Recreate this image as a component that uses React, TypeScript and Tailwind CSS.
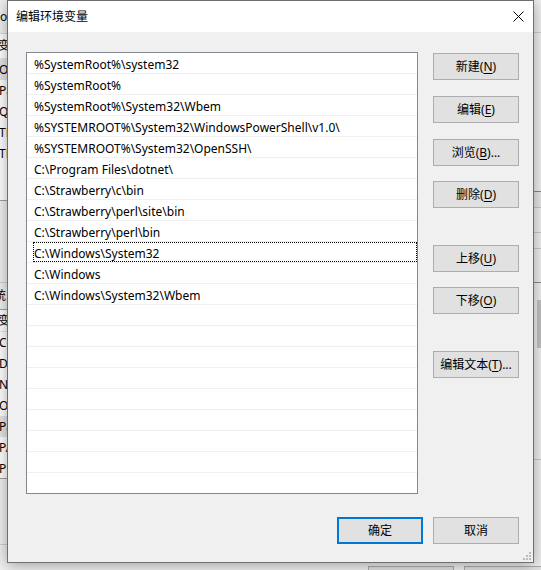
import React from "react"

const font = "font-['Segoe_UI','Noto_Sans','Noto_Sans_CJK_SC',sans-serif]"

const entries = [
  "%SystemRoot%\\system32",
  "%SystemRoot%",
  "%SystemRoot%\\System32\\Wbem",
  "%SYSTEMROOT%\\System32\\WindowsPowerShell\\v1.0\\",
  "%SYSTEMROOT%\\System32\\OpenSSH\\",
  "C:\\Program Files\\dotnet\\",
  "C:\\Strawberry\\c\\bin",
  "C:\\Strawberry\\perl\\site\\bin",
  "C:\\Strawberry\\perl\\bin",
  "C:\\Windows\\System32",
  "C:\\Windows",
  "C:\\Windows\\System32\\Wbem",
]

const FOCUSED = 9
const ROWS = 21

type BtnProps = {
  label: string
  mnemonic?: string
  tail?: string
  primary?: boolean
  className?: string
}

function Btn({ label, mnemonic, tail = "", primary, className = "" }: BtnProps) {
  return (
    <button
      type="button"
      className={`flex h-[27px] w-[86px] items-center justify-center bg-[#e1e1e1] text-[12px] leading-none text-black ${
        primary ? "border-2 border-[#0078d7]" : "border border-[#adadad]"
      } ${className}`}
    >
      <span>
        {label}
        {mnemonic && (
          <>
            (<span className="underline decoration-1 underline-offset-[2px]">{mnemonic}</span>)
          </>
        )}
        {tail}
      </span>
    </button>
  )
}

type BackRow = { t: string; h: number; head?: boolean; sel?: boolean }

function BackList({ rows, className }: { rows: BackRow[]; className: string }) {
  return (
    <div className={`flex shrink-0 flex-col bg-white ${className}`}>
      {rows.map((r, i) => (
        <div
          key={i}
          style={{ height: r.h }}
          className={`flex shrink-0 items-center whitespace-nowrap ${
            r.head ? "-ml-[2px] border-b border-[#e5e5e5]" : "-ml-px"
          } ${r.sel ? "bg-[#e5e5e5]" : ""}`}
        >
          {r.t}
        </div>
      ))}
    </div>
  )
}

// window behind the dialog, only its edges peek out
function BackWindow() {
  const user: BackRow[] = [
    { t: "变", h: 25, head: true },
    { t: "On", h: 21, sel: true },
    { t: "Pa", h: 21 },
    { t: "Qt", h: 21 },
    { t: "TE", h: 21 },
    { t: "TM", h: 21 },
  ]
  const sys: BackRow[] = [
    { t: "变", h: 22, head: true },
    { t: "Co", h: 21 },
    { t: "Dr", h: 21 },
    { t: "NU", h: 21 },
    { t: "OS", h: 21 },
    { t: "Pa", h: 21, sel: true },
    { t: "PA", h: 21 },
    { t: "PR", h: 21 },
  ]
  return (
    <div className="absolute inset-0 flex bg-[#f0f0f0] text-[12px] text-black">
      <div className="flex w-[7px] flex-col overflow-hidden">
        <div className="flex h-[34px] shrink-0 items-center border-b border-[#d9d9d9] pt-[1px]">o</div>
        <BackList rows={user} className="h-[167px] border-b border-[#a0a0a0]" />
        <div className="h-[82px] shrink-0 border-b border-[#d0d0d0]" />
        <div className="flex h-[26px] shrink-0 items-center whitespace-nowrap -ml-[6px]">统</div>
        <BackList rows={sys} className="h-[170px] border-y border-[#a0a0a0]" />
        <div className="h-[66px] shrink-0 border-b border-[#d0d0d0]" />
      </div>
      <div className="ml-auto flex w-[8px] flex-col">
        <div className="h-[33px] shrink-0 border-b border-[#d0d0d0]" />
        <div className="h-[159px] shrink-0 border-b border-[#8a8a8a]" />
        <div className="h-[16px] shrink-0 border-b border-[#c8c8c8] bg-[#e8e8e8]" />
        <div className="h-[25px] shrink-0 border-b border-[#c8c8c8]" />
        <div className="h-[16px] shrink-0 border-b border-[#c8c8c8]" />
        <div className="h-[34px] shrink-0 border-b border-[#8a8a8a]" />
        <div className="flex h-[160px] shrink-0 justify-end">
          <div className="mt-[17px] h-[48px] w-[4px] bg-[#c2c2c2]" />
        </div>
        <div className="h-[17px] shrink-0 border-b border-[#c8c8c8]" />
      </div>
    </div>
  )
}

export default function App() {
  return (
    <div className={`relative h-[570px] w-[541px] overflow-hidden ${font}`}>
      <BackWindow />

      {/* buttons of the window behind, under the dialog */}
      <div className="absolute left-[368px] top-[566px] flex gap-[10px]">
        <div className="h-[27px] w-[86px] border border-[#adadad] bg-[#e1e1e1]" />
        <div className="h-[27px] w-[86px] border border-[#adadad] bg-[#e1e1e1]" />
      </div>

      <div className="absolute left-[7px] top-0 flex h-[563px] w-[527px] flex-col border border-[#6f6f6f] bg-[#f0f0f0] shadow-[0_2px_14px_rgba(0,0,0,0.35)]">
        <div className="flex h-[31px] shrink-0 items-center justify-between bg-white pl-[8px] pr-[9px]">
          <span className="text-[12px] text-black">编辑环境变量</span>
          <svg width="11" height="11" viewBox="0 0 11 11" className="mb-px">
            <path d="M0.5 0.5 L10.5 10.5 M10.5 0.5 L0.5 10.5" stroke="#000" strokeWidth="1" />
          </svg>
        </div>

        <div className="relative flex flex-1 flex-col pl-[18px] pr-[14px] pt-[20px]">
          <div className="flex gap-[15px]">
            <div className="flex h-[442px] w-[392px] flex-col overflow-hidden border border-[#828790] bg-white">
              {Array.from({ length: ROWS }).map((_, i) => (
                <div key={i} className="flex h-[21px] shrink-0 border-b border-[#f0f0f0]">
                  <div
                    className={`ml-[6px] flex flex-1 items-center whitespace-nowrap pt-[4px] text-[12px] text-black ${
                      i === FOCUSED ? "border border-dotted border-black" : "border border-transparent"
                    }`}
                  >
                    {entries[i] ?? ""}
                  </div>
                </div>
              ))}
            </div>

            <div className="flex flex-col pt-px">
              <Btn label="新建" mnemonic="N" />
              <Btn label="编辑" mnemonic="E" className="mt-[16px]" />
              <Btn label="浏览" mnemonic="B" tail="..." className="mt-[16px]" />
              <Btn label="删除" mnemonic="D" className="mt-[15px]" />
              <Btn label="上移" mnemonic="U" className="mt-[37px]" />
              <Btn label="下移" mnemonic="O" className="mt-[15px]" />
              <Btn label="编辑文本" mnemonic="T" tail="..." className="mt-[37px]" />
            </div>
          </div>

          <div className="mt-[23px] flex justify-end gap-[10px]">
            <Btn label="确定" primary />
            <Btn label="取消" />
          </div>

          {/* size grip */}
          <svg width="9" height="9" viewBox="0 0 9 9" className="absolute bottom-[2px] right-[2px]">
            <g fill="#bcbcbc">
              <rect x="7" y="1" width="2" height="2" />
              <rect x="4" y="4" width="2" height="2" />
              <rect x="7" y="4" width="2" height="2" />
              <rect x="1" y="7" width="2" height="2" />
              <rect x="4" y="7" width="2" height="2" />
              <rect x="7" y="7" width="2" height="2" />
            </g>
          </svg>
        </div>
      </div>
    </div>
  )
}
